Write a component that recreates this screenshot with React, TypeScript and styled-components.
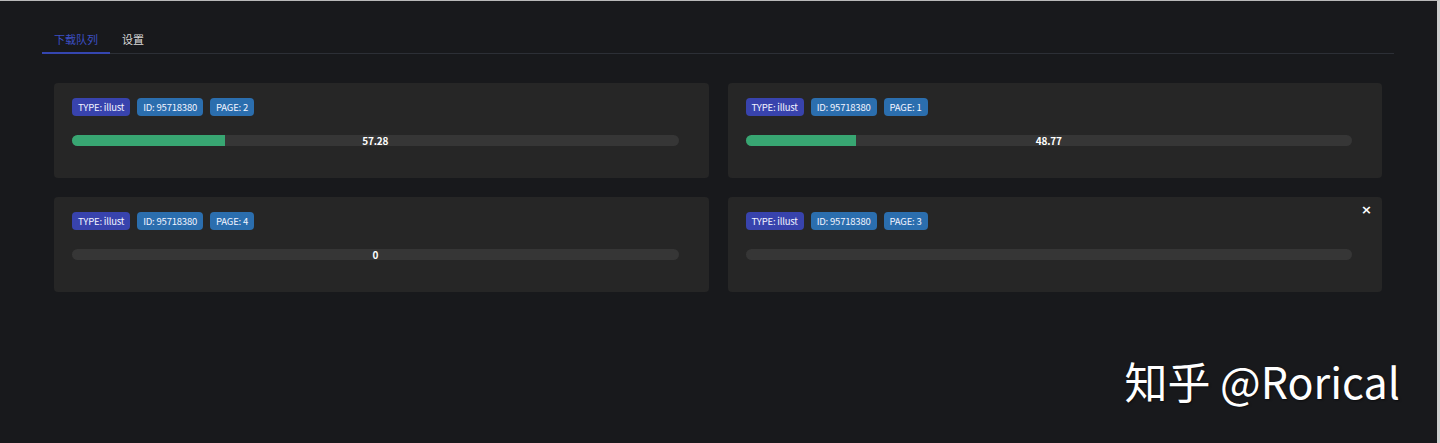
import React from "react";
import styled, { createGlobalStyle } from "styled-components";

const GlobalStyle = createGlobalStyle`
  html, body {
    margin: 0;
    padding: 0;
    background: #18191c;
  }
  body {
    font-family: "Noto Sans CJK SC", "Noto Sans", sans-serif;
    color: #e6e6e6;
  }
`;

interface Task {
  id: string;
  type: string;
  page: number;
  fill: number;
  label: string;
  closable?: boolean;
}

const tasks: Task[] = [
  { id: "95718380", type: "illust", page: 2, fill: 25.2, label: "57.28" },
  { id: "95718380", type: "illust", page: 1, fill: 18.2, label: "48.77" },
  { id: "95718380", type: "illust", page: 4, fill: 0, label: "0" },
  { id: "95718380", type: "illust", page: 3, fill: 0, label: "", closable: true },
];

export default function App() {
  return (
    <>
      <GlobalStyle />
      <Screen>
        <Tabs>
          <TabList>
            <Tab active>下载队列</Tab>
            <Tab>设置</Tab>
          </TabList>
          <Panel>
            <Grid>
              {tasks.map((t, i) => (
                <Card key={i}>
                  {t.closable && <CloseButton>×</CloseButton>}
                  <Badges>
                    <Badge kind="type">TYPE: {t.type}</Badge>
                    <Badge kind="info">ID: {t.id}</Badge>
                    <Badge kind="info">PAGE: {t.page}</Badge>
                  </Badges>
                  <Progress>
                    {t.fill > 0 && <ProgressFill style={{ width: `${t.fill}%` }} />}
                    {t.label && <ProgressLabel>{t.label}</ProgressLabel>}
                  </Progress>
                </Card>
              ))}
            </Grid>
          </Panel>
        </Tabs>
        <Watermark>知乎 @Rorical</Watermark>
      </Screen>
    </>
  );
}

const Screen = styled.div`
  box-sizing: border-box;
  height: 443px;
  border-top: 1px solid #b9b9b9;
  border-right: 3px solid #cfcfcf;
  padding: 29px 43px 0 42px;
  display: flex;
  flex-direction: column;
  overflow: hidden;
`;

const Tabs = styled.div`
  display: flex;
  flex-direction: column;
`;

const TabList = styled.div`
  display: flex;
  border-bottom: 1px solid #2c2f36;
`;

const Tab = styled.div<{ active?: boolean }>`
  padding: 2px 12px 6px;
  font-size: 11px;
  line-height: 14px;
  margin-bottom: -1px;
  color: ${(p) => (p.active ? "#3c4fc4" : "#d8d8d8")};
  border-bottom: 2px solid ${(p) => (p.active ? "#3546b0" : "transparent")};
`;

const Panel = styled.div`
  padding: 29px 12px 0;
`;

const Grid = styled.div`
  display: grid;
  grid-template-columns: 1fr 1fr;
  column-gap: 19px;
  row-gap: 19px;
`;

const Card = styled.div`
  position: relative;
  box-sizing: border-box;
  height: 95px;
  background: #262626;
  border-radius: 4px;
  padding: 15px 30px 0 18px;
`;

const CloseButton = styled.div`
  position: absolute;
  top: 5px;
  right: 10px;
  font-size: 13px;
  font-weight: 700;
  color: #ffffff;
  font-family: "DejaVu Sans", sans-serif;
  line-height: 16px;
`;

const Badges = styled.div`
  display: flex;
  gap: 7px;
`;

const Badge = styled.div<{ kind: "type" | "info" }>`
  height: 18px;
  line-height: 18px;
  padding: 0 6px;
  border-radius: 4px;
  font-size: 9.5px;
  letter-spacing: -0.2px;
  color: #f2f4ff;
  background: ${(p) => (p.kind === "type" ? "#3843ad" : "#2b6eae")};
`;

const Progress = styled.div`
  position: relative;
  margin-top: 19px;
  height: 11px;
  border-radius: 6px;
  background: #363636;
`;

const ProgressFill = styled.div`
  height: 100%;
  background: #38a672;
  border-radius: 6px 0 0 6px;
`;

const ProgressLabel = styled.div`
  position: absolute;
  left: 0;
  right: 0;
  top: 0;
  text-align: center;
  font-size: 10px;
  font-weight: 700;
  color: #ffffff;
  line-height: 12px;
  letter-spacing: -0.2px;
`;

const Watermark = styled.div`
  margin-top: auto;
  margin-bottom: 38px;
  align-self: flex-end;
  margin-right: -6px;
  font-size: 43px;
  line-height: 50px;
  color: #ffffff;
  font-family: "Noto Sans CJK SC", "Noto Sans", sans-serif;
  text-shadow: 1px 1px 2px rgba(0, 0, 0, 0.5);
`;
